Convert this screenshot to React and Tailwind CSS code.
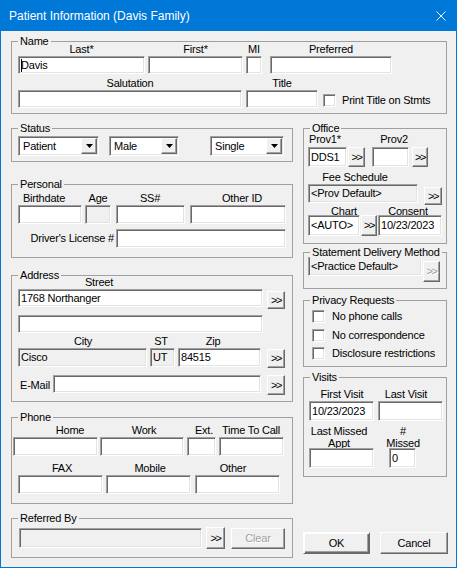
import React from 'react'

// sunken edit box (classic Win32 look)
const Box = ({ className = '', gray = false, children }) => (
  <div
    className={`flex shrink-0 items-center overflow-hidden whitespace-nowrap border border-t-[#a0a0a0] border-l-[#a0a0a0] border-r-white border-b-white pl-[2px] shadow-[inset_1px_1px_0_#696969,inset_-1px_-1px_0_#e3e3e3] ${gray ? 'bg-[#f0f0f0]' : 'bg-white'} ${className}`}
  >
    {children}
  </div>
)

const Btn = ({ className = '', disabled = false, children }) => (
  <button
    type="button"
    className={`flex shrink-0 items-center justify-center border border-t-white border-l-white border-r-[#696969] border-b-[#696969] bg-[#f0f0f0] leading-[13px] shadow-[inset_-1px_-1px_0_#a0a0a0] ${disabled ? 'text-[#a0a0a0] [text-shadow:1px_1px_0_#fff]' : 'text-black'} ${className}`}
  >
    {children}
  </button>
)

const More = ({ className = '', disabled }) => (
  <Btn className={className} disabled={disabled}>
    <span className="text-[11px] tracking-[-1.5px]">&gt;&gt;</span>
  </Btn>
)

const Lbl = ({ className = '', children }) => (
  <div className={`h-[13px] shrink-0 whitespace-nowrap text-center leading-[13px] ${className}`}>{children}</div>
)

const Check = () => (
  <div className="h-[13px] w-[13px] shrink-0 border border-t-[#a0a0a0] border-l-[#a0a0a0] border-r-white border-b-white bg-white shadow-[inset_1px_1px_0_#696969,inset_-1px_-1px_0_#e3e3e3]" />
)

const Combo = ({ className = '', value }) => (
  <Box className={`h-[20px] pr-[1px] ${className}`}>
    <span className="flex-1 pl-[2px]">{value}</span>
    <div className="flex h-[16px] w-[16px] items-center justify-center border border-t-white border-l-white border-r-[#696969] border-b-[#696969] bg-[#f0f0f0] shadow-[inset_-1px_-1px_0_#a0a0a0]">
      <svg width="7" height="4" viewBox="0 0 7 4">
        <path d="M0 0h7L3.5 4z" fill="#000" />
      </svg>
    </div>
  </Box>
)

const Group = ({ title, className = '', children }) => (
  <div className={`relative shrink-0 border border-[#a0a0a0] ${className}`}>
    <span className="absolute left-[6px] top-[-7px] bg-[#f0f0f0] px-[2px] leading-[13px] whitespace-nowrap">{title}</span>
    {children}
  </div>
)

export default function App() {
  return (
    <div className="flex h-[568px] w-[457px] flex-col bg-[#0078d7] font-['Liberation_Sans',Arial,sans-serif] text-[11px] tracking-[-0.2px] text-black">
      {/* title bar */}
      <div className="flex h-[31px] shrink-0 items-center justify-between pl-[9px] pr-[11px] text-[12px] tracking-normal text-white">
        <span>Patient Information (Davis Family)</span>
        <svg width="10" height="10" viewBox="0 0 10 10">
          <path d="M0.5 0.5l9 9M9.5 0.5l-9 9" stroke="#fff" strokeWidth="1" />
        </svg>
      </div>

      <div className="mx-[1px] mb-[1px] flex-1 bg-[#f0f0f0] pl-[10px] pt-[10px]">
        {/* Name */}
        <Group title="Name" className="h-[73px] w-[436px] pl-[6px] pt-[1px]">
          <div className="flex">
            <div className="flex w-[127px] shrink-0 flex-col">
              <Lbl>Last*</Lbl>
              <Box className="h-[18px] w-[127px]">
                <span className="h-[13px] w-px bg-black" />
                <span className="-ml-px">Davis</span>
              </Box>
            </div>
            <div className="ml-[3px] flex w-[95px] shrink-0 flex-col">
              <Lbl>First*</Lbl>
              <Box className="h-[18px] w-[95px]" />
            </div>
            <div className="ml-[3px] flex w-[16px] shrink-0 flex-col">
              <Lbl>MI</Lbl>
              <Box className="h-[18px] w-[16px]" />
            </div>
            <div className="ml-[8px] flex w-[122px] shrink-0 flex-col">
              <Lbl>Preferred</Lbl>
              <Box className="h-[18px] w-[122px]" />
            </div>
          </div>
          <div className="mt-[3px] flex">
            <div className="flex w-[224px] shrink-0 flex-col">
              <Lbl>Salutation</Lbl>
              <Box className="h-[18px] w-[224px]" />
            </div>
            <div className="ml-[4px] flex w-[72px] shrink-0 flex-col">
              <Lbl>Title</Lbl>
              <Box className="h-[18px] w-[72px]" />
            </div>
            <div className="mb-[1px] ml-[5px] flex items-center self-end">
              <Check />
              <span className="ml-[6px] whitespace-nowrap leading-[13px]">Print Title on Stmts</span>
            </div>
          </div>
        </Group>

        <div className="mt-[14px] flex gap-[10px]">
          {/* left column */}
          <div className="flex w-[282px] shrink-0 flex-col">
            <Group title="Status" className="h-[34px] pl-[6px] pt-[7px]">
              <div className="flex">
                <Combo className="w-[81px]" value="Patient" />
                <Combo className="ml-[10px] w-[70px]" value="Male" />
                <Combo className="ml-[31px] w-[74px]" value="Single" />
              </div>
            </Group>

            <Group title="Personal" className="mt-[22px] h-[74px] pl-[6px] pt-[7px]">
              <div className="flex">
                <Lbl className="w-[52px]">Birthdate</Lbl>
                <Lbl className="w-[56px]">Age</Lbl>
                <Lbl className="w-[48px]">SS#</Lbl>
                <Lbl className="ml-[24px] w-[88px]">Other ID</Lbl>
              </div>
              <div className="flex">
                <Box className="h-[19px] w-[64px]" />
                <Box gray className="ml-[3px] h-[19px] w-[26px]" />
                <Box className="ml-[5px] h-[19px] w-[69px]" />
                <Box className="ml-[5px] h-[19px] w-[96px]" />
              </div>
              <div className="mt-[5px] flex items-center">
                <span className="w-[96px] shrink-0 whitespace-nowrap text-right">Driver's License #</span>
                <Box className="ml-[2px] h-[19px] w-[170px]" />
              </div>
            </Group>

            <Group title="Address" className="mt-[17px] h-[127px] pl-[6px]">
              <div className="flex">
                <Lbl className="w-[162px]">Street</Lbl>
              </div>
              <div className="flex items-start">
                <Box className="h-[18px] w-[245px]">1768 Northanger</Box>
                <More className="ml-[4px] mt-[2px] h-[18px] w-[18px]" />
              </div>
              <Box className="mt-[6px] h-[18px] w-[245px]" />
              <div className="mt-[2px] flex">
                <Lbl className="w-[130px]">City</Lbl>
                <Lbl className="w-[26px]">ST</Lbl>
                <Lbl className="w-[78px]">Zip</Lbl>
              </div>
              <div className="flex items-start">
                <Box gray className="h-[19px] w-[129px]">Cisco</Box>
                <Box gray className="ml-[3px] h-[19px] w-[25px]">UT</Box>
                <Box className="ml-[3px] h-[19px] w-[83px]">84515</Box>
                <More className="ml-[6px] mt-px h-[19px] w-[18px]" />
              </div>
              <div className="mt-[7px] flex items-start">
                <span className="ml-[2px] w-[33px] shrink-0 self-center">E-Mail</span>
                <Box className="h-[18px] w-[208px]" />
                <More className="ml-[6px] h-[20px] w-[18px]" />
              </div>
            </Group>

            <Group title="Phone" className="mt-[15px] h-[87px] pl-[1px] pt-[6px]">
              <div className="flex">
                <Lbl className="ml-[27px] w-[60px]">Home</Lbl>
                <Lbl className="ml-[14px] w-[60px]">Work</Lbl>
                <Lbl className="ml-[16px] w-[28px]">Ext.</Lbl>
                <Lbl className="w-[66px]">Time To Call</Lbl>
              </div>
              <div className="flex">
                <Box className="h-[19px] w-[85px]" />
                <Box className="ml-[2px] h-[19px] w-[84px]" />
                <Box className="ml-[3px] h-[19px] w-[29px]" />
                <Box className="ml-[3px] h-[19px] w-[65px]" />
              </div>
              <div className="mt-[6px] flex">
                <Lbl className="ml-[5px] w-[88px]">FAX</Lbl>
                <Lbl className="w-[88px]">Mobile</Lbl>
                <Lbl className="w-[78px]">Other</Lbl>
              </div>
              <div className="flex">
                <Box className="ml-[5px] h-[19px] w-[85px]" />
                <Box className="ml-[3px] h-[19px] w-[85px]" />
                <Box className="ml-[4px] h-[19px] w-[85px]" />
              </div>
            </Group>

            <Group title="Referred By" className="mt-[14px] h-[40px] pl-[7px] pt-[9px]">
              <div className="flex items-start">
                <Box gray className="h-[20px] w-[183px]" />
                <More className="ml-[4px] -mt-px h-[22px] w-[19px]" />
                <Btn disabled className="ml-[6px] h-[21px] w-[54px]">Clear</Btn>
              </div>
            </Group>
          </div>

          {/* right column */}
          <div className="flex w-[144px] shrink-0 flex-col">
            <Group title="Office" className="h-[116px] pl-[4px] pt-[4px]">
              <div className="flex">
                <Lbl className="ml-px w-[60px] text-left">Prov1*</Lbl>
                <Lbl className="ml-[3px] w-[44px]">Prov2</Lbl>
              </div>
              <div className="mt-px flex">
                <Box className="h-[20px] w-[39px]">DDS1</Box>
                <More className="ml-px h-[20px] w-[17px]" />
                <Box className="ml-[7px] h-[20px] w-[37px]" />
                <More className="ml-[3px] h-[20px] w-[16px]" />
              </div>
              <Lbl className="mt-[4px] w-[94px]">Fee Schedule</Lbl>
              <div className="flex items-start">
                <Box gray className="h-[19px] w-[110px]">&lt;Prov Default&gt;</Box>
                <More className="ml-[6px] mt-[3px] h-[18px] w-[18px]" />
              </div>
              <div className="flex">
                <Lbl className="w-[72px]">Chart</Lbl>
                <Lbl className="w-[56px]">Consent</Lbl>
              </div>
              <div className="-mt-[3px] flex">
                <Box className="h-[21px] w-[52px]">&lt;AUTO&gt;</Box>
                <More className="ml-px h-[21px] w-[16px]" />
                <Box className="ml-px h-[21px] w-[64px]">10/23/2023</Box>
              </div>
            </Group>

            <Group title="Statement Delivery Method" className="mt-[8px] h-[37px] pl-[4px] pt-[4px]">
              <div className="flex items-start">
                <Box gray className="h-[19px] w-[114px]">&lt;Practice Default&gt;</Box>
                <More disabled className="ml-px mt-[4px] h-[21px] w-[17px]" />
              </div>
            </Group>

            <Group title="Privacy Requests" className="mt-[11px] h-[67px] pl-[8px] pt-[9px]">
              <div className="flex h-[13px] items-center">
                <Check />
                <span className="ml-[7px] whitespace-nowrap">No phone calls</span>
              </div>
              <div className="mt-[6px] flex h-[13px] items-center">
                <Check />
                <span className="ml-[7px] whitespace-nowrap">No correspondence</span>
              </div>
              <div className="mt-[5px] flex h-[13px] items-center">
                <Check />
                <span className="ml-[7px] whitespace-nowrap">Disclosure restrictions</span>
              </div>
            </Group>

            <Group title="Visits" className="mt-[10px] h-[100px] pl-[5px] pt-[10px]">
              <div className="flex">
                <Lbl className="w-[66px]">First Visit</Lbl>
                <Lbl className="w-[62px]">Last Visit</Lbl>
              </div>
              <div className="flex">
                <Box className="h-[20px] w-[65px]">10/23/2023</Box>
                <Box className="ml-[4px] h-[20px] w-[65px]" />
              </div>
              <div className="mt-[4px] flex h-[23px] leading-[12px]">
                <div className="w-[60px] shrink-0 text-center">
                  Last Missed
                  <br />
                  Appt
                </div>
                <div className="w-[68px] shrink-0 text-center">
                  #
                  <br />
                  Missed
                </div>
              </div>
              <div className="flex">
                <Box className="h-[20px] w-[65px]" />
                <Box className="ml-[15px] h-[20px] w-[27px]">0</Box>
              </div>
            </Group>

            <div className="mt-[55px] flex">
              <Btn className="h-[22px] w-[67px] border-black shadow-[inset_1px_1px_0_#fff,inset_-1px_-1px_0_#696969,inset_-2px_-2px_0_#a0a0a0]">OK</Btn>
              <Btn className="ml-[10px] h-[22px] w-[68px]">Cancel</Btn>
            </div>
          </div>
        </div>
      </div>
    </div>
  )
}
